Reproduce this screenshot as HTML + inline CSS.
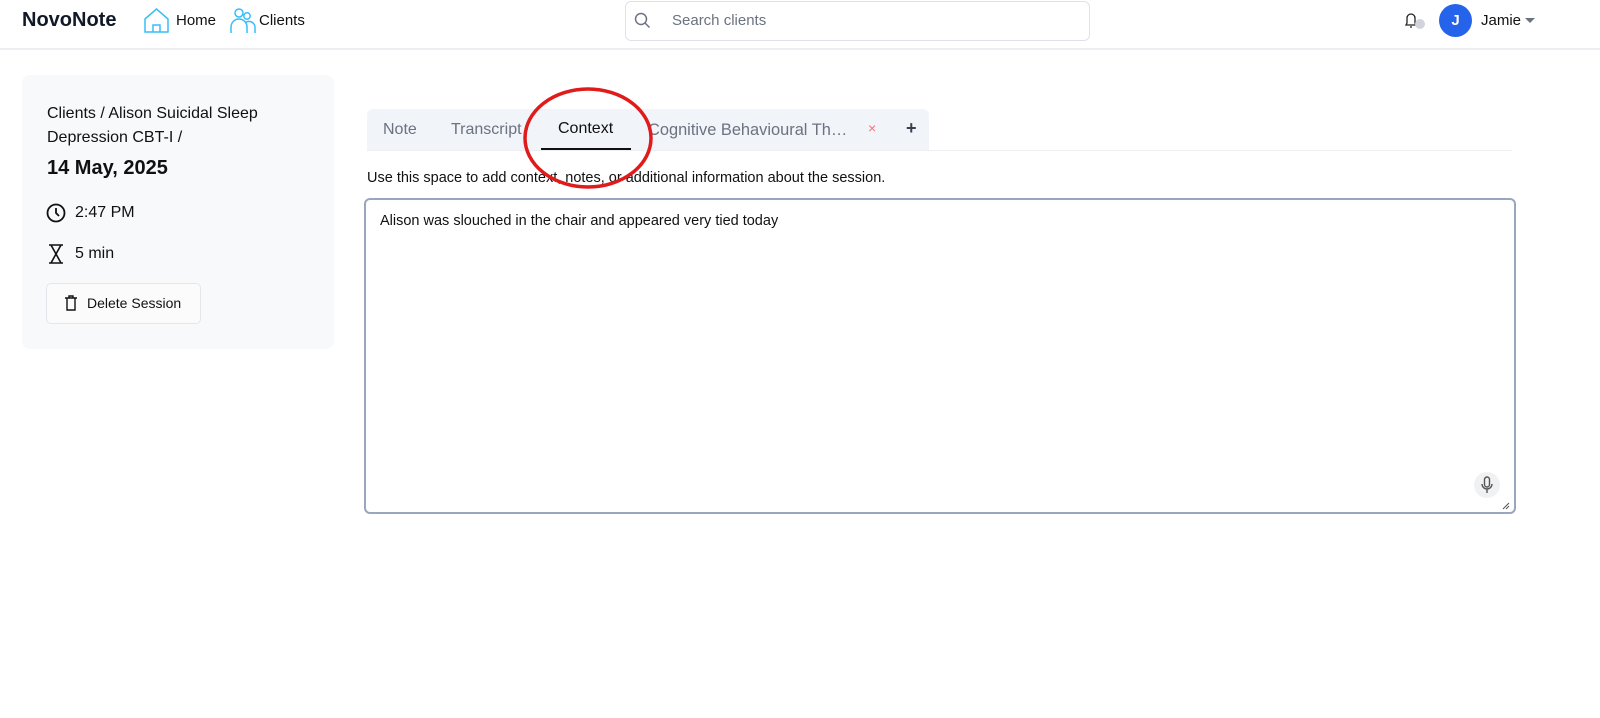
<!DOCTYPE html>
<html><head><meta charset="utf-8"><style>
*{box-sizing:border-box;margin:0;padding:0}
body{width:1600px;height:718px;background:#fff;font-family:"Liberation Sans",Arial,sans-serif;color:#111;position:relative;overflow:hidden}
.abs{position:absolute;white-space:nowrap}
.nav{left:0;top:0;width:1600px;height:50px;border-bottom:2px solid #eceef2}
</style></head><body>
<div class="abs nav"></div>
<div class="abs" style="left:22px;top:9px;font-size:20px;font-weight:bold;color:#111827">NovoNote</div>
<svg class="abs" style="left:143px;top:7px" width="27" height="27" viewBox="0 0 27 27" fill="none" stroke="#38bdf8" stroke-width="1.5"><path d="M2 12 L13.5 2 L25 12 V25 H2 Z"/><path d="M10 25 V18 H17 V25"/></svg>
<div class="abs" style="left:176px;top:12px;font-size:15px">Home</div>
<svg class="abs" style="left:230px;top:7px" width="26" height="26" viewBox="0 0 26 26" fill="none" stroke="#38bdf8" stroke-width="1.5"><circle cx="9" cy="6" r="4"/><circle cx="17" cy="9" r="3.2"/><path d="M1 26 V20 A8 8 0 0 1 17 20 V26"/><path d="M15 16 A6 6 0 0 1 25 20 V26"/></svg>
<div class="abs" style="left:259px;top:12px;font-size:15px">Clients</div>
<div class="abs" style="left:625px;top:1px;width:465px;height:40px;border:1px solid #dfe2e7;border-radius:6px"></div>
<svg class="abs" style="left:634px;top:12px" width="17" height="17" viewBox="0 0 17 17" fill="none" stroke="#6b7280" stroke-width="1.5"><circle cx="7" cy="7" r="5.5"/><path d="M11 11 L15.5 15.5"/></svg>
<div class="abs" style="left:672px;top:12px;font-size:15px;color:#6b7280">Search clients</div>
<svg class="abs" style="left:1403px;top:11px" width="24" height="20" viewBox="0 0 24 20" fill="none" stroke="#222" stroke-width="1.3"><path d="M3 14 H13 L12 12 V7 A4 4 0 0 0 4 7 V12 Z"/><path d="M7 16 H9"/><circle cx="17" cy="13" r="5" fill="#d1d5db" stroke="none"/></svg>
<div class="abs" style="left:1439px;top:4px;width:33px;height:33px;border-radius:50%;background:#2563eb;color:#fff;font-weight:bold;font-size:15px;text-align:center;line-height:33px">J</div>
<div class="abs" style="left:1481px;top:12px;font-size:15px">Jamie</div>
<div class="abs" style="left:1525px;top:18px;border-left:5px solid transparent;border-right:5px solid transparent;border-top:5px solid #6b7280"></div>

<div class="abs" style="left:22px;top:75px;width:312px;height:274px;background:#f8f9fb;border-radius:8px"></div>
<div class="abs" style="left:47px;top:102px;font-size:16px;line-height:24px;width:260px;white-space:normal">Clients / Alison Suicidal Sleep Depression CBT-I /</div>
<div class="abs" style="left:47px;top:157px;font-size:20px;font-weight:bold">14 May, 2025</div>
<svg class="abs" style="left:46px;top:203px" width="20" height="20" viewBox="0 0 20 20" fill="none" stroke="#111" stroke-width="1.8"><circle cx="10" cy="10" r="8.5"/><path d="M10 5 V10 L13 13"/></svg>
<div class="abs" style="left:75px;top:204px;font-size:16px">2:47 PM</div>
<svg class="abs" style="left:48px;top:244px" width="16" height="20" viewBox="0 0 16 20" fill="none" stroke="#111" stroke-width="1.6"><path d="M1 1 H15 M1 19 H15 M3 1 L8 10 L3 19 M13 1 L8 10 L13 19"/></svg>
<div class="abs" style="left:75px;top:245px;font-size:16px">5 min</div>
<div class="abs" style="left:46px;top:283px;width:155px;height:41px;border:1px solid #e3e6ea;border-radius:5px;background:#fbfbfc"></div>
<svg class="abs" style="left:64px;top:295px" width="14" height="16" viewBox="0 0 14 16" fill="none" stroke="#111" stroke-width="1.4"><path d="M1 3 H13 M5 3 V1 H9 V3 M3 3 V15 H11 V3"/></svg>
<div class="abs" style="left:87px;top:295px;font-size:14px">Delete Session</div>

<div class="abs" style="left:367px;top:109px;width:562px;height:41px;background:#f1f4f8;border-radius:6px 6px 0 0"></div>
<div class="abs" style="left:367px;top:150px;width:1145px;height:1px;background:#eceef2"></div>
<div class="abs" style="left:383px;top:121px;font-size:16px;color:#6b7280">Note</div>
<div class="abs" style="left:451px;top:121px;font-size:16px;color:#6b7280">Transcript</div>
<div class="abs" style="left:558px;top:120px;font-size:16px;color:#111">Context</div>
<div class="abs" style="left:541px;top:148px;width:90px;height:2px;background:#111"></div>
<div class="abs" style="left:648px;top:121px;font-size:16.4px;color:#6b7280">Cognitive Behavioural Th…</div>
<div class="abs" style="left:868px;top:120px;font-size:14px;color:#f87171">×</div>
<div class="abs" style="left:906px;top:118px;font-size:18px;font-weight:bold;color:#374151">+</div>
<div class="abs" style="left:367px;top:170px;font-size:14.5px">Use this space to add context, notes, or additional information about the session.</div>
<div class="abs" style="left:364px;top:198px;width:1152px;height:316px;border:2px solid #9aa6bd;border-radius:6px"></div>
<div class="abs" style="left:380px;top:213px;font-size:14.5px">Alison was slouched in the chair and appeared very tied today</div>
<div class="abs" style="left:1474px;top:472px;width:26px;height:26px;border-radius:50%;background:#f0f1f3"></div>
<svg class="abs" style="left:1480px;top:476px" width="14" height="18" viewBox="0 0 14 18" fill="none" stroke="#555" stroke-width="1.4"><rect x="4.5" y="1" width="5" height="10" rx="2.5"/><path d="M2 8 A5 5 0 0 0 12 8 M7 13 V17"/></svg>
<svg class="abs" style="left:1502px;top:502px" width="8" height="8" viewBox="0 0 8 8" stroke="#555"><path d="M1 7 L7 1 M4 7 L7 4"/></svg>

<svg class="abs" style="left:522px;top:86px" width="132" height="104" viewBox="0 0 132 104"><ellipse cx="66" cy="52" rx="63" ry="49" fill="none" stroke="#e01b1b" stroke-width="3.5"/></svg>
</body></html>
